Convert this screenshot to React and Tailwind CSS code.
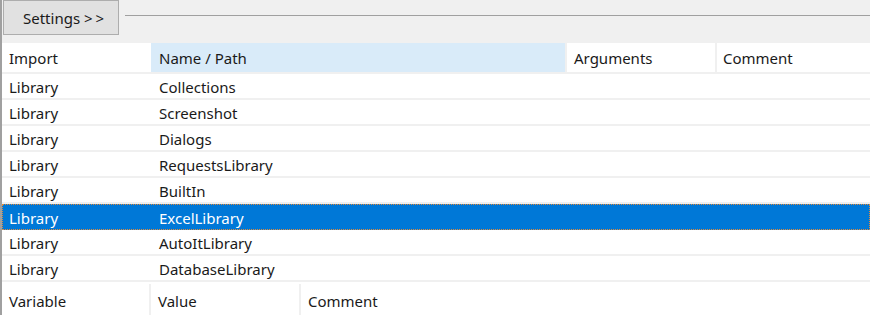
import React from 'react';

const imports = [
  'Collections',
  'Screenshot',
  'Dialogs',
  'RequestsLibrary',
  'BuiltIn',
  'ExcelLibrary',
  'AutoItLibrary',
  'DatabaseLibrary',
];

export default function App() {
  const selected = 'ExcelLibrary';
  return (
    <div
      className="w-[870px] h-[315px] overflow-hidden bg-white border-l-2 border-[#a0a0a0] text-[15px] text-[#1a1a1a] flex flex-col"
      style={{ fontFamily: '"Noto Sans", "Open Sans", sans-serif' }}
    >
      {/* top bar */}
      <div className="h-[43px] bg-[#f0f0f0] flex items-start">
        <button className="ml-[1px] w-[116px] h-[35px] bg-[#e1e1e1] border border-[#adadad] text-left pl-[19px] leading-[32px]">
          Settings &gt;<span className="ml-[3px]">&gt;</span>
        </button>
        <div className="flex-1 ml-[6px] mt-[15px] border-t border-[#a0a0a0]" />
      </div>

      {/* header */}
      <div className="h-[31px] flex border-b-2 border-[#f0f0f0]">
        <div className="w-[149px] pl-[7px] leading-[31px]">Import</div>
        <div className="w-[414px] pl-[8px] leading-[31px] bg-[#d9ebf9]">Name / Path</div>
        <div className="w-[150px] pl-[7px] leading-[31px] border-l-2 border-[#f0f0f0]">Arguments</div>
        <div className="flex-1 pl-[6px] leading-[31px] border-l-2 border-[#f0f0f0]">Comment</div>
      </div>

      {/* rows */}
      {imports.map((name) => {
        const isSel = name === selected;
        return (
          <div
            key={name}
            className={
              isSel
                ? 'h-[26px] flex bg-[#0078d7] text-white border border-dotted border-[#e08a3c]'
                : 'h-[26px] flex border-b-2 border-[#f0f0f0]'
            }
          >
            <div className={isSel ? 'w-[149px] pl-[6px] leading-[26px]' : 'w-[149px] pl-[7px] leading-[26px]'}>Library</div>
            <div className={isSel ? 'flex-1 pl-[7px] leading-[26px]' : 'flex-1 pl-[8px] leading-[26px]'}>{name}</div>
          </div>
        );
      })}

      {/* variables header */}
      <div className="flex-1 flex mt-[2px]">
        <div className="w-[149px] pl-[7px] pt-[6px] border-r-2 border-[#f0f0f0]">Variable</div>
        <div className="w-[150px] pl-[7px] pt-[6px] border-r-2 border-[#f0f0f0]">Value</div>
        <div className="flex-1 pl-[7px] pt-[6px]">Comment</div>
      </div>
    </div>
  );
}
